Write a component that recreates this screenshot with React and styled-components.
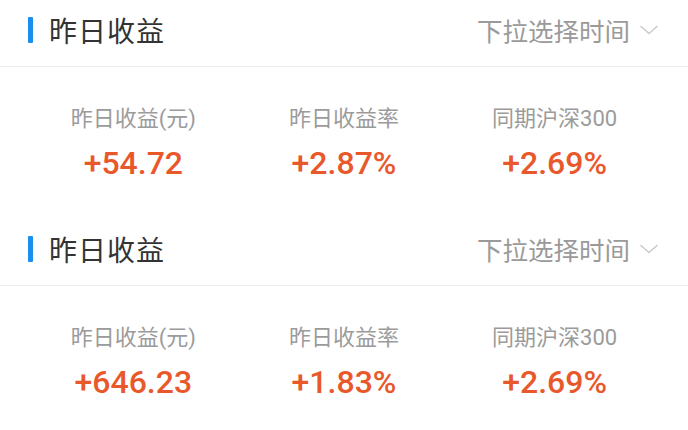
import React from 'react';
import styled, { createGlobalStyle } from 'styled-components';

const GlobalStyle = createGlobalStyle`
  html, body {
    margin: 0;
    padding: 0;
    background: #ffffff;
  }
  body {
    font-family: Roboto, "Noto Sans CJK SC", sans-serif;
    -webkit-font-smoothing: antialiased;
  }
`;

const sections = [
  {
    title: '昨日收益',
    stats: [
      { label: '昨日收益(元)', value: '+54.72' },
      { label: '昨日收益率', value: '+2.87%' },
      { label: '同期沪深300', value: '+2.69%' },
    ],
  },
  {
    title: '昨日收益',
    stats: [
      { label: '昨日收益(元)', value: '+646.23' },
      { label: '昨日收益率', value: '+1.83%' },
      { label: '同期沪深300', value: '+2.69%' },
    ],
  },
];

const ChevronDown = () => (
  <svg width="18" height="10" viewBox="0 0 18 10" fill="none">
    <path d="M1 1.5 L9 8.5 L17 1.5" stroke="#c8c8c8" strokeWidth="1.4" strokeLinecap="round" strokeLinejoin="round" />
  </svg>
);

const App = () => {
  return (
    <Page>
      <GlobalStyle />
      {sections.map((section, i) => (
        <Section key={i}>
          <Header>
            <TitleGroup>
              <TitleBar />
              <Title>{section.title}</Title>
            </TitleGroup>
            <Picker>
              <PickerText>下拉选择时间</PickerText>
              <ChevronDown />
            </Picker>
          </Header>
          <StatsRow>
            {section.stats.map((stat) => (
              <Stat key={stat.label}>
                <StatLabel>{stat.label}</StatLabel>
                <StatValue>{stat.value}</StatValue>
              </Stat>
            ))}
          </StatsRow>
        </Section>
      ))}
    </Page>
  );
};

export default App;

const Page = styled.div`
  width: 688px;
  height: 430px;
  overflow: hidden;
  background: #fff;
`;

const Section = styled.section`
  display: flex;
  flex-direction: column;
  height: 219px;
`;

const Header = styled.div`
  display: flex;
  justify-content: space-between;
  align-items: center;
  height: 60px;
  padding: 0 30px 6px 28px;
  border-bottom: 1px solid #ededed;
`;

const TitleGroup = styled.div`
  display: flex;
  align-items: center;
  gap: 16px;
`;

const TitleBar = styled.span`
  display: block;
  width: 5px;
  height: 26px;
  border-radius: 1px;
  background: #1b8ff0;
`;

const Title = styled.h2`
  margin: 0;
  font-family: "Noto Sans CJK SC", sans-serif;
  font-size: 28px;
  font-weight: 400;
  color: #333;
  letter-spacing: 1px;
  line-height: 1;
`;

const Picker = styled.div`
  display: flex;
  align-items: center;
  gap: 10px;
`;

const PickerText = styled.span`
  font-family: "Noto Sans CJK SC", sans-serif;
  font-size: 25.5px;
  color: #9a9a9a;
  line-height: 1;
`;

const StatsRow = styled.div`
  display: grid;
  grid-template-columns: repeat(3, 1fr);
  padding: 37px 28px 0;
`;

const Stat = styled.div`
  display: flex;
  flex-direction: column;
  align-items: center;
  gap: 13px;
`;

const StatLabel = styled.span`
  font-family: Roboto, "Noto Sans CJK SC", sans-serif;
  font-size: 22px;
  color: #9b9b9b;
  line-height: 30px;
`;

const StatValue = styled.span`
  font-family: Roboto, "Noto Sans CJK SC", sans-serif;
  font-size: 32px;
  font-weight: 500;
  color: #e9582a;
  line-height: 32px;
`;
